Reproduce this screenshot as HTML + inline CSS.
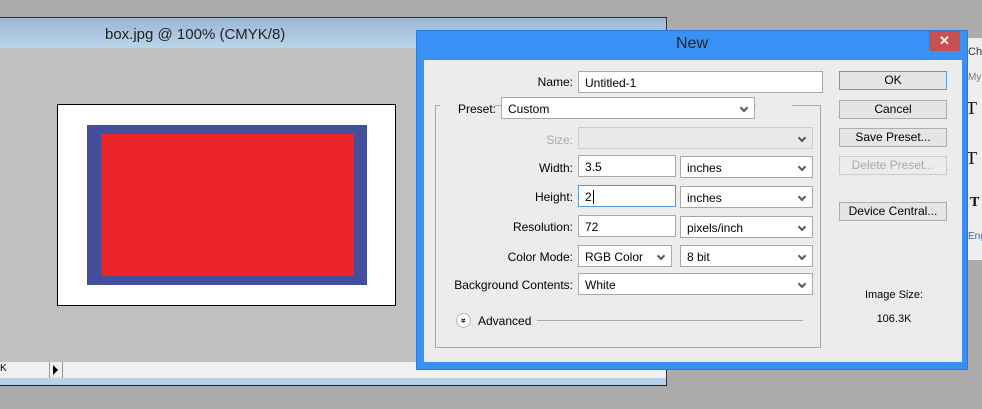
<!DOCTYPE html>
<html><head><style>
*{margin:0;padding:0;box-sizing:border-box}
body{width:982px;height:409px;background:#ababab;position:relative;overflow:hidden;font-family:"Liberation Sans",sans-serif;font-size:12px;color:#000}
.a{position:absolute}
.inp{position:absolute;background:#fff;border:1px solid #a8a8a8;height:22px;padding:4px 6px 0;font-size:12px}
.sel::after{content:"";position:absolute;right:7px;top:7px;width:4px;height:4px;border-right:2px solid #555;border-bottom:2px solid #555;transform:rotate(45deg)}
.lbl{position:absolute;text-align:right;width:200px;font-size:12px}
.btn{position:absolute;left:839px;width:108px;height:19px;border:1px solid #acacac;background:#e5e5e5;text-align:center;font-size:12px;line-height:17px}
</style></head><body>
<div class="a" style="left:0;top:17px;width:667px;height:369px;border-top:1px solid #333;border-right:1px solid #333;border-bottom:2px solid #222;background:#c0c0c0"></div>
<div class="a" style="left:0;top:18px;width:666px;height:30px;background:linear-gradient(#9db6d2,#bad4ec)"></div>
<div class="a" style="left:105px;top:26px;font-size:15px;color:#222">box.jpg @ 100% (CMYK/8)</div>
<div class="a" style="left:57px;top:104px;width:339px;height:202px;background:#fff;border:1px solid #000"></div>
<div class="a" style="left:87px;top:125px;width:280px;height:160px;background:#434f9c"></div>
<div class="a" style="left:101px;top:134px;width:253px;height:142px;background:#ee2229"></div>
<div class="a" style="left:0;top:362px;width:666px;height:16px;background:#f0f0f0"></div>
<div class="a" style="left:0;top:363px;font-size:10px">K</div>
<div class="a" style="left:49px;top:362px;width:1px;height:16px;background:#999"></div>
<div class="a" style="left:53px;top:365px;width:0;height:0;border-left:5px solid #000;border-top:5px solid transparent;border-bottom:5px solid transparent"></div>
<div class="a" style="left:62px;top:362px;width:1px;height:16px;background:#999"></div>
<div class="a" style="left:0;top:378px;width:666px;height:7px;background:#b8d2ea"></div>
<div class="a" style="left:962px;top:38px;width:20px;height:222px;background:#eee;border-left:1px solid #888"></div>
<div class="a" style="left:968px;top:46px;font-size:11px;color:#333">Ch</div>
<div class="a" style="left:968px;top:72px;font-size:10px;color:#777">My</div>
<div class="a" style="left:966px;top:98px;font-size:18px;font-family:'Liberation Serif'">T</div>
<div class="a" style="left:966px;top:148px;font-size:18px;font-family:'Liberation Serif'">T</div>
<div class="a" style="left:970px;top:195px;font-size:14px;font-family:'Liberation Serif';font-weight:bold">T</div>
<div class="a" style="left:968px;top:231px;font-size:10px;color:#3366aa">Eng</div>
<div class="a" style="left:416px;top:30px;width:552px;height:340px;background:#3a91f5;border:1px solid #2a78d8"></div>
<div class="a" style="left:416px;top:35px;width:552px;text-align:center;font-size:16px;color:#222">New</div>
<div class="a" style="left:929px;top:31px;width:31px;height:20px;background:#c75050;color:#fff;text-align:center;font-size:13px;line-height:20px;font-weight:bold">✕</div>
<div class="a" style="left:424px;top:60px;width:538px;height:302px;background:#ececec"></div>
<div class="lbl" style="left:373px;top:75px">Name:</div>
<div class="inp" style="left:578px;top:71px;width:245px">Untitled-1</div>
<div class="a" style="left:435px;top:105px;width:386px;height:243px;border:1px solid #aaa"></div>
<div class="a" style="left:440px;top:98px;width:55px;height:12px;background:#ececec"></div>
<div class="a" style="left:756px;top:98px;width:36px;height:12px;background:#ececec"></div>
<div class="lbl" style="left:296px;top:102px">Preset:</div>
<div class="inp sel" style="left:501px;top:97px;width:254px">Custom</div>
<div class="lbl" style="left:373px;top:133px;color:#aaa">Size:</div>
<div class="inp sel" style="left:578px;top:127px;width:235px;background:#e8e8e8;border-color:#ccc"></div>
<div class="lbl" style="left:373px;top:161px">Width:</div>
<div class="inp" style="left:578px;top:155px;width:98px">3.5</div>
<div class="inp sel" style="left:680px;top:156px;width:133px">inches</div>
<div class="lbl" style="left:373px;top:190px">Height:</div>
<div class="inp" style="left:578px;top:185px;width:98px;border-color:#5b9bd5">2<span style="border-left:1px solid #000;margin-left:1px"></span></div>
<div class="inp sel" style="left:680px;top:186px;width:133px">inches</div>
<div class="lbl" style="left:373px;top:220px">Resolution:</div>
<div class="inp" style="left:578px;top:215px;width:98px">72</div>
<div class="inp sel" style="left:680px;top:216px;width:133px">pixels/inch</div>
<div class="lbl" style="left:373px;top:250px">Color Mode:</div>
<div class="inp sel" style="left:578px;top:245px;width:94px">RGB Color</div>
<div class="inp sel" style="left:680px;top:245px;width:133px">8 bit</div>
<div class="lbl" style="left:373px;top:278px">Background Contents:</div>
<div class="inp sel" style="left:578px;top:273px;width:235px">White</div>
<div class="a" style="left:456px;top:313px;width:15px;height:15px;border-radius:50%;background:#fafafa;border:1px solid #bbb;font-size:9px;text-align:center;line-height:13px;font-weight:bold;transform:rotate(90deg)">»</div>
<div class="a" style="left:478px;top:314px">Advanced</div>
<div class="a" style="left:537px;top:320px;width:266px;height:1px;background:#aaa"></div>
<div class="btn" style="top:71px;border-color:#5b9bd5">OK</div>
<div class="btn" style="top:100px">Cancel</div>
<div class="btn" style="top:128px">Save Preset...</div>
<div class="btn" style="top:156px;color:#aaa;border-color:#ccc;background:#ececec">Delete Preset...</div>
<div class="btn" style="top:202px">Device Central...</div>
<div class="a" style="left:840px;top:289px;width:108px;text-align:center;font-size:11px">Image Size:</div>
<div class="a" style="left:840px;top:313px;width:108px;text-align:center;font-size:11px">106.3K</div>
</body></html>
